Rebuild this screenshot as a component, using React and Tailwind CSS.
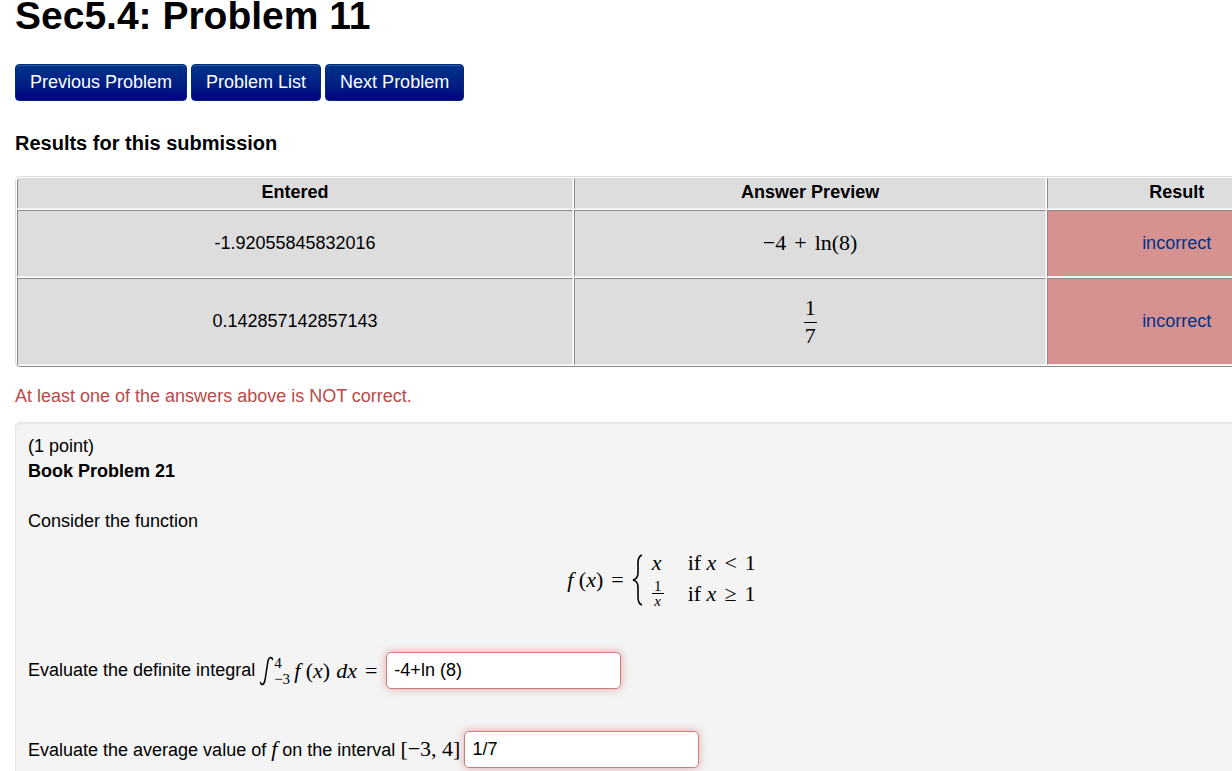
import React from 'react';

const results = [
  { entered: '-1.92055845832016', preview: <LogPreview />, height: 'h-[67px]' },
  { entered: '0.142857142857143', preview: <Fraction top="1" bottom="7" />, height: 'h-[87px]' },
];

function Math({ children, className = '' }) {
  return (
    <span className={`inline-flex items-center font-['Liberation_Serif',serif] text-[22px] leading-6 whitespace-nowrap ${className}`}>
      {children}
    </span>
  );
}

function Op({ children }) {
  return <span className="mx-2">{children}</span>;
}

function Fraction({ top, bottom }) {
  return (
    <Math className="flex-col">
      <span className="border-b border-black px-px pb-0.5">{top}</span>
      <span className="pt-px">{bottom}</span>
    </Math>
  );
}

function LogPreview() {
  return (
    <Math className="pb-0.5">
      <span>−4</span>
      <Op>+</Op>
      <span>ln(8)</span>
    </Math>
  );
}

function Fx() {
  return (
    <span>
      <i>f</i> (<i>x</i>)
    </span>
  );
}

function Brace() {
  return (
    <svg width="12" height="52" viewBox="0 0 12 52" fill="none" stroke="black" strokeWidth="1.6" aria-hidden="true">
      <path d="M10 1C7 2 6 5 6 9V19C6 23 5 25 1 26C5 27 6 29 6 33V43C6 47 7 50 10 51" />
    </svg>
  );
}

function IntegralSign() {
  return (
    <svg width="15" height="30" viewBox="0 0 15 30" fill="none" stroke="black" strokeWidth="1.5" strokeLinecap="round" aria-hidden="true">
      <path d="M13.5 3.5C13 0.5 10 0.5 9 5L6 24C5 29.5 2 29.5 1.5 26.5" />
    </svg>
  );
}

function NavButton({ children }) {
  return (
    <button
      type="button"
      className="h-[37px] px-3.5 rounded text-lg leading-6 pb-0.5 text-white whitespace-nowrap border border-[#002a80] bg-linear-to-b from-[#003388] to-[#000080] shadow-[inset_0_1px_0_rgba(255,255,255,0.2)]"
    >
      {children}
    </button>
  );
}

function AnswerInput({ id, value }) {
  return (
    <input
      id={id}
      type="text"
      defaultValue={value}
      className="w-[235px] h-[37px] px-[7px] text-lg leading-6 text-black bg-white rounded-[5px] border border-[#d07a7a] shadow-[0_0_8px_rgba(210,90,90,0.5)] outline-none"
    />
  );
}

export default function App() {
  const cell = 'border border-[#eee] border-l-[#888] text-center align-middle p-0';

  return (
    <div className="overflow-x-hidden bg-white text-black text-lg leading-[25px] font-['Liberation_Sans',Arial,sans-serif]">
      <main className="ml-[15px] -mr-[76px]">
        <h1 className="text-[39px] leading-8 font-bold">Sec5.4: Problem 11</h1>

        <nav className="flex gap-1 mt-8">
          <NavButton>Previous Problem</NavButton>
          <NavButton>Problem List</NavButton>
          <NavButton>Next Problem</NavButton>
        </nav>

        <h2 className="mt-[30px] text-xl leading-[25px] font-bold">Results for this submission</h2>

        <table className="w-full mt-5 table-fixed border-separate border-spacing-px rounded-[5px] border border-[#ddd] border-b-[#888]">
          <colgroup>
            <col className="w-[43.2%]" />
            <col className="w-[36.7%]" />
            <col />
          </colgroup>
          <thead>
            <tr className="h-[31px] bg-[#ddd] leading-6">
              <th className={`${cell} border-t-[#ddd] rounded-tl-[4px] pb-1`}>Entered</th>
              <th className={`${cell} border-t-[#ddd] pb-1`}>Answer Preview</th>
              <th className={`${cell} border-t-[#ddd] pb-1`}>Result</th>
            </tr>
          </thead>
          <tbody>
            {results.map((row) => (
              <tr key={row.entered} className={`${row.height} bg-[#ddd]`}>
                <td className={`${cell} border-t-[#888]`}>{row.entered}</td>
                <td className={`${cell} border-t-[#888]`}>
                  <div className="flex justify-center">{row.preview}</div>
                </td>
                <td className={`${cell} border-t-[#888] bg-[#d69191]`}>
                  <a href="#answer-1" className="text-[#003388]">incorrect</a>
                </td>
              </tr>
            ))}
          </tbody>
        </table>

        <p className="mt-[17px] text-[#b94a48]">At least one of the answers above is NOT correct.</p>

        <section className="mt-[13px] px-3 pt-[11px] pb-3 rounded-[5px] border border-[#e3e3e3] bg-[#f4f4f4] shadow-[inset_0_1px_1px_rgba(0,0,0,0.05)]">
          <p>(1 point)</p>
          <p className="font-bold">Book Problem 21</p>
          <p className="mt-[25px]">Consider the function</p>

          <div className="flex justify-center mt-[17px]">
            <Math>
              <Fx />
              <Op>=</Op>
              <Brace />
              <span className="grid grid-cols-[36px_auto] items-center gap-y-1 ml-2">
                <i>x</i>
                <span>if <i>x</i><Op>&lt;</Op>1</span>
                <span className="flex flex-col w-3 text-center text-[15px] leading-[14px]">
                  <span className="border-b border-black">1</span>
                  <i>x</i>
                </span>
                <span>if <i>x</i><Op>≥</Op>1</span>
              </span>
            </Math>
          </div>

          <div className="flex items-center mt-11">
            <label htmlFor="answer-1" className="flex items-center">
              Evaluate the definite integral
              <Math className="ml-1 mr-px">
                <IntegralSign />
                <span className="flex flex-col mr-1 text-[15px] leading-4">
                  <span>4</span>
                  <span>−3</span>
                </span>
                <Fx />
                <i className="ml-1.5">dx</i>
                <Op>=</Op>
              </Math>
            </label>
            <AnswerInput id="answer-1" value="-4+ln (8)" />
          </div>

          <div className="flex items-center mt-[42px]">
            <label htmlFor="answer-2" className="mr-1">
              Evaluate the average value of <Math><i>f</i></Math> on the interval <Math>[−3, 4]</Math>
            </label>
            <AnswerInput id="answer-2" value="1/7" />
          </div>
        </section>
      </main>
    </div>
  );
}
